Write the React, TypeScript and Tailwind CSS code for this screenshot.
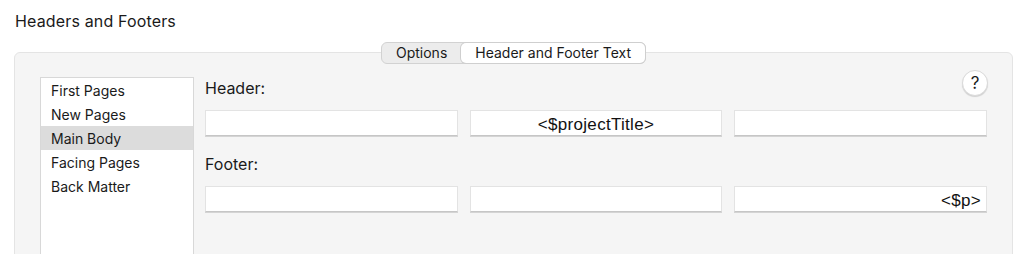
import React, { useState } from "react";

const sections = ["First Pages", "New Pages", "Main Body", "Facing Pages", "Back Matter"];

const Field = ({ value, align }: { value?: string; align?: "center" | "right" }) => (
  <div
    className={`flex-1 h-[26px] flex items-center pt-[3px] px-[5px] bg-white border border-[#e3e3e3] border-b-[#c6c6c6] shadow-[0_1px_0_#d4d4d4] text-[17px] tracking-[0.3px] text-[#111] font-['Liberation_Sans',Arial,sans-serif] ${
      align === "right" ? "justify-end" : "justify-center"
    }`}
  >
    {value}
  </div>
);

const App = () => {
  const [selected, setSelected] = useState("Main Body");
  const [tab, setTab] = useState("text");

  return (
    <div className="w-[1024px] h-[254px] overflow-hidden bg-white text-[#1a1a1a] font-['Inter','Noto_Sans',sans-serif]">
      <div className="pt-[10px] pl-[15px] text-[16px] leading-[22px] tracking-[0.15px]">Headers and Footers</div>

      <div className="mt-[10px] pl-[3px] flex justify-center relative z-10">
        <div className="flex h-[22px] rounded-[6px] border border-[#d2d2d2] bg-[#ececec] text-[14px] leading-[20px]">
          <button
            onClick={() => setTab("options")}
            className={`px-[14px] rounded-[5px] ${tab === "options" ? "bg-white shadow-[0_0_0_1px_#cfcfcf]" : ""}`}
          >
            Options
          </button>
          <button
            onClick={() => setTab("text")}
            className={`px-[14px] rounded-[5px] ${tab === "text" ? "bg-white shadow-[0_0_0_1px_#cfcfcf]" : ""}`}
          >
            Header and Footer Text
          </button>
        </div>
      </div>

      <div className="-mt-[12px] ml-[14px] mr-[11px] h-[230px] rounded-[6px] border border-[#e4e4e4] bg-[#f5f5f5] flex pt-[24px] pl-[25px]">
        <div className="w-[154px] h-[220px] bg-white border border-[#d8d8d8] text-[14px]">
          {sections.map((s) => (
            <div
              key={s}
              onClick={() => setSelected(s)}
              className={`h-[24px] leading-[25px] px-[10px] ${selected === s ? "bg-[#dcdcdc]" : ""}`}
            >
              {s}
            </div>
          ))}
        </div>

        <div className="ml-[11px] w-[782px] flex flex-col">
          <div className="flex justify-between items-start h-[22px] mb-[11px]">
            <span className="text-[16px] leading-[22px]">Header:</span>
            <button className="-mt-[7px] -mr-[1px] w-[26px] h-[26px] rounded-full bg-white border border-[#dadada] shadow-[0_1px_1px_rgba(0,0,0,0.15)] flex items-center justify-center text-[17px] leading-none">
              ?
            </button>
          </div>
          <div className="flex gap-[12px]">
            <Field />
            <Field value="<$projectTitle>" />
            <Field />
          </div>

          <div className="mt-[17px] mb-[11px] h-[22px] text-[16px] leading-[22px]">Footer:</div>
          <div className="flex gap-[12px]">
            <Field />
            <Field />
            <Field value="<$p>" align="right" />
          </div>
        </div>
      </div>
    </div>
  );
};

export default App;
